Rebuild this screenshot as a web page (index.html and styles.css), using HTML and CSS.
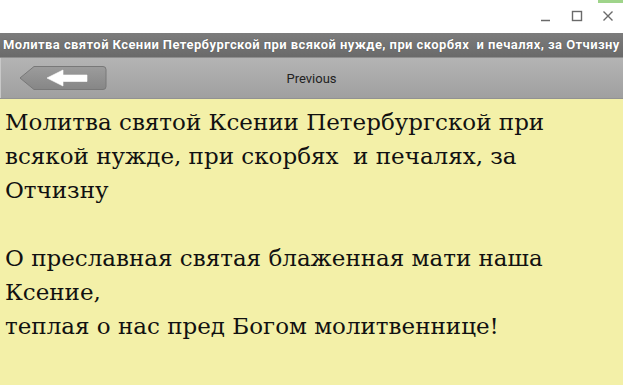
FILE: index.html
```html
<!DOCTYPE html>
<html>
<head>
<meta charset="utf-8">
<link rel="stylesheet" href="styles.css">
</head>
<body>
<div class="app">
  <div class="chrome">
    <div class="green"></div>
    <div class="controls">
      <svg class="ctl" width="14" height="14" viewBox="0 0 14 14"><path d="M2 11.5H11" stroke="#6a6a6a" stroke-width="1.5" fill="none"/></svg>
      <svg class="ctl" width="14" height="14" viewBox="0 0 14 14"><rect x="2.5" y="2.5" width="9" height="9" stroke="#6a6a6a" stroke-width="1.4" fill="none"/></svg>
      <svg class="ctl" width="14" height="14" viewBox="0 0 14 14"><path d="M2.5 2.5L11.5 11.5M11.5 2.5L2.5 11.5" stroke="#6a6a6a" stroke-width="1.4" fill="none"/></svg>
    </div>
  </div>
  <div class="titlebar">Молитва святой Ксении Петербургской при всякой нужде, при скорбях&nbsp; и печалях, за Отчизну</div>
  <div class="toolbar">
    <div class="back">
      <svg width="88" height="28" viewBox="0 0 88 28">
        <defs>
          <linearGradient id="bg" x1="0" y1="0" x2="0" y2="1">
            <stop offset="0" stop-color="#9c9c9c"/>
            <stop offset="1" stop-color="#868686"/>
          </linearGradient>
        </defs>
        <path d="M1 14L15 2.5H84Q87 2.5 87 5.5V22.5Q87 25.5 84 25.5H15Z" fill="url(#bg)" stroke="#787878" stroke-width="1"/>
        <path d="M28 14L44 6V11H68V17.5H44V22Z" fill="#ffffff" stroke="#ffffff" stroke-width="0.6" stroke-linejoin="round"/>
      </svg>
    </div>
    <div class="prev">Previous</div>
  </div>
  <div class="content">
    <p class="text">Молитва святой Ксении Петербургской при всякой нужде, при скорбях&nbsp; и печалях, за Отчизну<br><br>О преславная святая блаженная мати наша Ксение,<br>теплая о нас пред Богом молитвеннице!</p>
  </div>
</div>
</body>
</html>
```

FILE: styles.css
```css
html, body {
  margin: 0;
  padding: 0;
  width: 623px;
  height: 385px;
  overflow: hidden;
  background: #ffffff;
}
.app {
  display: flex;
  flex-direction: column;
  height: 385px;
}
.chrome {
  flex: 0 0 33px;
  background: #ffffff;
  position: relative;
}
.green {
  position: absolute;
  right: 0;
  top: 0;
  width: 25px;
  height: 3px;
  background: #9fd48a;
}
.controls {
  display: flex;
  justify-content: flex-end;
  gap: 17px;
  padding: 9px 8px 0 0;
}
.titlebar {
  flex: 0 0 24px;
  background: linear-gradient(#7c7c7c, #6a6a6a);
  color: #ffffff;
  font-family: Roboto, "Liberation Sans", sans-serif;
  font-weight: bold;
  font-size: 13px;
  letter-spacing: 0.42px;
  line-height: 24px;
  padding-left: 3px;
  white-space: nowrap;
  overflow: hidden;
  text-shadow: 0 0 1px #444;
}
.toolbar {
  flex: 0 0 40px;
  background: linear-gradient(#b4b4b4, #a0a0a0);
  border-top: 1px solid #8e8e8e;
  border-bottom: 1px solid #929292;
  box-shadow: inset 1px 0 0 #c8c8c8;
  display: flex;
  align-items: center;
  position: relative;
}
.back {
  margin-left: 19px;
  display: flex;
}
.prev {
  position: absolute;
  left: 0;
  right: 0;
  text-align: center;
  font-family: Roboto, "Liberation Sans", sans-serif;
  font-size: 13px;
  color: #222;
  pointer-events: none;
}
.content {
  flex: 1;
  background: #f3f0a8;
  padding: 0 5px;
}
.text {
  margin: 6px 0 0 0;
  font-family: "DejaVu Serif", serif;
  font-size: 23px;
  line-height: 34px;
  color: #111;
}
```
